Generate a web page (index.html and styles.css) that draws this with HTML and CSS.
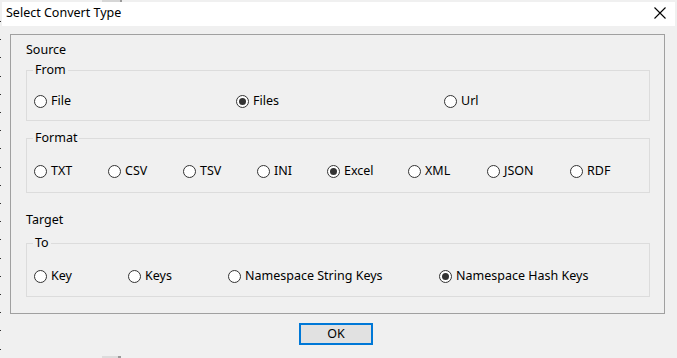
FILE: index.html
```html
<!DOCTYPE html>
<html>
<head>
<meta charset="utf-8">
<title>Select Convert Type</title>
<link rel="stylesheet" href="styles.css">
</head>
<body>
<div class="ticks"></div>
<div class="topbit"></div>
<div class="bottombit"></div>
<div class="window">
  <div class="titlebar">
    <span class="title">Select Convert Type</span>
    <svg class="close" width="12" height="12" viewBox="0 0 12 12"><path d="M0.5 0.5 L11.5 11.5 M11.5 0.5 L0.5 11.5" stroke="#000" stroke-width="1.1" fill="none"/></svg>
  </div>
  <div class="outer">
    <div class="section-label">Source</div>
    <fieldset class="group group-from">
      <legend>From</legend>
      <div class="row row-from">
        <label class="opt"><span class="radio"></span>File</label>
        <label class="opt"><span class="radio checked"></span>Files</label>
        <label class="opt"><span class="radio"></span>Url</label>
      </div>
    </fieldset>
    <fieldset class="group group-format">
      <legend>Format</legend>
      <div class="row row-format">
        <label class="opt"><span class="radio"></span>TXT</label>
        <label class="opt"><span class="radio"></span>CSV</label>
        <label class="opt"><span class="radio"></span>TSV</label>
        <label class="opt"><span class="radio"></span>INI</label>
        <label class="opt"><span class="radio checked"></span>Excel</label>
        <label class="opt"><span class="radio"></span>XML</label>
        <label class="opt"><span class="radio"></span>JSON</label>
        <label class="opt"><span class="radio"></span>RDF</label>
      </div>
    </fieldset>
    <div class="section-label target">Target</div>
    <fieldset class="group group-to">
      <legend>To</legend>
      <div class="row row-to">
        <label class="opt"><span class="radio"></span>Key</label>
        <label class="opt"><span class="radio"></span>Keys</label>
        <label class="opt"><span class="radio"></span>Namespace String Keys</label>
        <label class="opt"><span class="radio checked"></span>Namespace Hash Keys</label>
      </div>
    </fieldset>
  </div>
  <div class="actions">
    <button class="ok">OK</button>
  </div>
</div>
</body>
</html>
```
FILE: styles.css
```css
html, body {
  margin: 0;
  padding: 0;
}
body {
  width: 677px;
  height: 358px;
  overflow: hidden;
  background: #f0f0f0;
  font-family: "Noto Sans", "Open Sans", "DejaVu Sans", sans-serif;
  font-size: 12.5px;
  color: #000;
  position: relative;
}
.ticks {
  position: absolute;
  left: 0;
  top: 21px;
  width: 1px;
  height: 337px;
  background: repeating-linear-gradient(to bottom, #333 0, #333 1px, transparent 1px, transparent 18.2px);
}
.topbit {
  position: absolute;
  left: 102px;
  top: 0;
  width: 18px;
  height: 2px;
  background: #d6d6d6;
  border-right: 2px solid #9a9a9a;
}
.bottombit {
  position: absolute;
  left: 102px;
  top: 356px;
  width: 16px;
  height: 2px;
  background: #dcdcdc;
  border-right: 3px solid #9a9a9a;
}
.window {
  padding: 2px 2px 0 2px;
}
.titlebar {
  height: 24px;
  background: #fff;
  display: flex;
  align-items: center;
  justify-content: space-between;
  padding: 0 9px 0 4px;
}
.title {
  font-size: 12.5px;
  line-height: 16px;
  margin-top: -3px;
}
.close {
  display: block;
  margin-top: -2px;
}
.outer {
  margin: 8px 0 0 8px;
  border: 1px solid #a0a0a0;
  padding: 7px 14px 0 15px;
  box-sizing: border-box;
  width: 655px;
  height: 280px;
}
.section-label {
  line-height: 16px;
  height: 16px;
}
.section-label.target {
  margin-top: 19px;
}
.group {
  margin: 0;
  border: 1px solid #dcdcdc;
  padding: 0 0 0 6px;
  min-width: 0;
}
.group legend {
  padding: 0 2px;
  line-height: 16px;
  margin-left: 0;
}
.group-from {
  margin-top: 4px;
  padding-top: 15px;
  padding-bottom: 11px;
}
.group-format {
  margin-top: 9px;
  padding-top: 17px;
  padding-bottom: 13px;
}
.group-to {
  margin-top: 7px;
  padding-top: 17px;
  padding-bottom: 12px;
}
.row {
  display: grid;
  height: 16px;
  align-items: center;
  padding-left: 1px;
}
.row-from {
  grid-template-columns: 202px 208px auto;
}
.row-format {
  grid-template-columns: 74px 75px 74px 70px 81px 79px 83px auto;
}
.row-to {
  grid-template-columns: 94px 100px 211px auto;
}
.opt {
  display: flex;
  align-items: center;
  line-height: 16px;
  white-space: nowrap;
}
.radio {
  width: 11px;
  height: 11px;
  border: 1px solid #333;
  border-radius: 50%;
  background: #fff;
  margin-right: 4px;
  display: flex;
  align-items: center;
  justify-content: center;
  flex: none;
}
.radio.checked::after {
  content: "";
  width: 7px;
  height: 7px;
  border-radius: 50%;
  background: #333;
}
.actions {
  display: flex;
  padding-left: 297px;
  margin-top: 9px;
}
.ok {
  width: 74px;
  height: 22px;
  border: 2px solid #0078d7;
  background: #e1e1e1;
  font-family: inherit;
  font-size: 12.5px;
  line-height: 16px;
  color: #000;
  padding: 0;
  margin: 0;
}
```
